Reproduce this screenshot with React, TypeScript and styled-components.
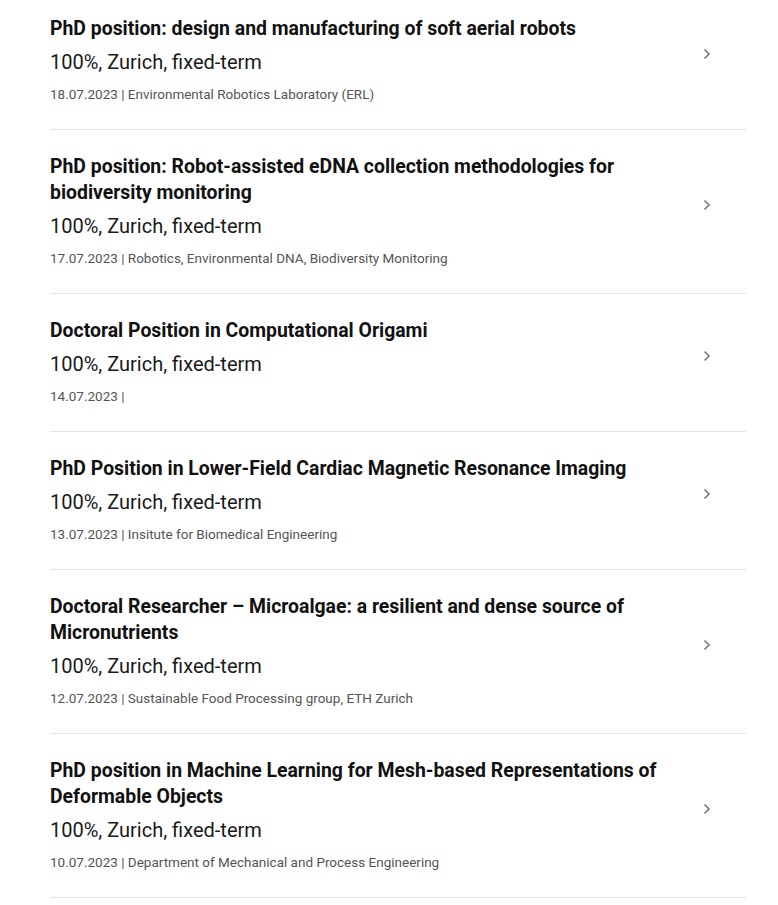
import React from "react";
import styled, { createGlobalStyle } from "styled-components";

const Global = createGlobalStyle`
  html, body { margin: 0; padding: 0; background: #fff; }
  body { font-family: Roboto, "Liberation Sans", sans-serif; color: #1a1a1a; }
`;

const List = styled.ul`
  list-style: none;
  margin: 0;
  padding: 0 32px 0 50px;
`;

const Item = styled.li`
  display: flex;
  align-items: center;
  padding: 24px 0 25px;
  border-top: 1px solid #e4e4e4;
  &:first-child { border-top: none; padding-top: 16px; }
  &:last-child { border-bottom: 1px solid #e4e4e4; }
`;

const Body = styled.div`
  flex: 1;
  min-width: 0;
  padding-right: 40px;
`;

const Title = styled.h3`
  margin: 0;
  font-size: 19.4px;
  line-height: 26px;
  font-weight: 700;
  color: #111;
`;

const Sub = styled.p`
  margin: 6px 0 0;
  font-size: 20px;
  line-height: 28px;
  font-weight: 400;
  color: #1a1a1a;
`;

const Meta = styled.p`
  margin: 8px 0 0;
  font-size: 13.5px;
  line-height: 20px;
  color: #555;
`;

const Chevron = styled.span`
  flex: none;
  width: 16px;
  display: flex;
  justify-content: center;
  margin: 0 31px 12px 0;
  color: #777;
`;

const jobs = [
  { t: "PhD position: design and manufacturing of soft aerial robots", d: "18.07.2023", o: "Environmental Robotics Laboratory (ERL)" },
  { t: "PhD position: Robot-assisted eDNA collection methodologies for biodiversity monitoring", d: "17.07.2023", o: "Robotics, Environmental DNA, Biodiversity Monitoring" },
  { t: "Doctoral Position in Computational Origami", d: "14.07.2023", o: "" },
  { t: "PhD Position in Lower-Field Cardiac Magnetic Resonance Imaging", d: "13.07.2023", o: "Insitute for Biomedical Engineering" },
  { t: "Doctoral Researcher – Microalgae: a resilient and dense source of Micronutrients", d: "12.07.2023", o: "Sustainable Food Processing group, ETH Zurich" },
  { t: "PhD position in Machine Learning for Mesh-based Representations of Deformable Objects", d: "10.07.2023", o: "Department of Mechanical and Process Engineering" },
];

export default function App() {
  return (
    <>
      <Global />
      <List>
        {jobs.map((j) => (
          <Item key={j.t}>
            <Body>
              <Title>{j.t}</Title>
              <Sub>100%, Zurich, fixed-term</Sub>
              <Meta>{j.d} | {j.o}</Meta>
            </Body>
            <Chevron>
              <svg width="8" height="12" viewBox="0 0 8 12" fill="none">
                <path d="M1.5 1.5 L6 6 L1.5 10.5" stroke="currentColor" strokeWidth="1.6" />
              </svg>
            </Chevron>
          </Item>
        ))}
      </List>
    </>
  );
}
